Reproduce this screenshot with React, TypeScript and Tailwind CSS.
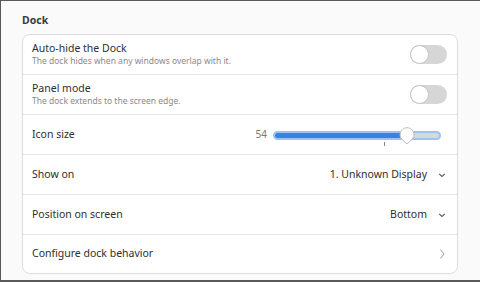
import React from 'react';

const font = { fontFamily: '"Noto Sans", "Open Sans", sans-serif' };

function Toggle() {
  return (
    <div className="relative h-[19px] w-[37px] rounded-full bg-[#d6d6d6]">
      <div className="absolute left-0 top-0 h-[19px] w-[19px] rounded-full border border-[#c4c4c4] bg-white" />
    </div>
  );
}

function Chevron({ right }: { right?: boolean }) {
  return right ? (
    <svg width="10" height="12" viewBox="0 0 10 12" className="text-[#9a9a9a]">
      <path d="M3.5 1.5 L7 6 L3.5 10.5" fill="none" stroke="currentColor" strokeWidth="1" />
    </svg>
  ) : (
    <svg width="10" height="10" viewBox="0 0 10 10" className="text-[#555]">
      <path d="M2.2 3.8 L5 6.4 L7.8 3.8" fill="none" stroke="currentColor" strokeWidth="1.1" />
    </svg>
  );
}

function Row({ children, last }: { children: React.ReactNode; last?: boolean }) {
  return (
    <div
      className={`flex items-center justify-between pl-[9px] pr-[10px] ${
        last ? 'h-[38px]' : 'h-[40px] border-b border-[#e6e6e6]'
      }`}
    >
      {children}
    </div>
  );
}

function Slider({ value }: { value: number }) {
  // value in percent of track
  return (
    <div className="relative mr-[6px] h-[20px] w-[168px]">
      <div className="absolute left-0 top-[6px] h-[9px] w-full rounded-full border-2 border-[#9cc2f0] bg-[#d8d8d8]">
        <div className="h-full rounded-full bg-[#3584e4]" style={{ width: `${value}%` }} />
      </div>
      <div className="absolute left-[111px] top-[17px] h-[4px] w-px bg-[#888]" />
      <svg
        width="16"
        height="19"
        viewBox="0 0 16 19"
        className="absolute top-[1px]"
        style={{ left: `calc(${value}% - 8px)` }}
      >
        <path
          d="M8 18 L2.2 12.6 A7 7 0 1 1 13.8 12.6 Z"
          fill="#ffffff"
          stroke="#bdbdbd"
          strokeWidth="1"
        />
      </svg>
    </div>
  );
}

export default function App() {
  return (
    <div
      className="h-[282px] w-[480px] overflow-hidden border-l border-t border-b-2 border-[#5a5a5a] bg-[#fafafa] px-[21px] text-[#2e2e2e]"
      style={font}
    >
      <div className="pt-[12px] text-[10.5px] font-bold leading-[14px] text-[#3a3a3a]">Dock</div>
      <div className="mt-[7px] w-[436px] rounded-[8px] border border-[#dedede] bg-white">
        <Row>
          <div className="flex flex-col">
            <span className="text-[10.5px] leading-[13px]">Auto-hide the Dock</span>
            <span className="text-[8.5px] leading-[12px] text-[#8a8a8a]">
              The dock hides when any windows overlap with it.
            </span>
          </div>
          <Toggle />
        </Row>
        <Row>
          <div className="flex flex-col">
            <span className="text-[10.5px] leading-[13px]">Panel mode</span>
            <span className="text-[8.5px] leading-[12px] text-[#8a8a8a]">
              The dock extends to the screen edge.
            </span>
          </div>
          <Toggle />
        </Row>
        <Row>
          <span className="text-[10.5px]">Icon size</span>
          <div className="flex items-center gap-[6px]">
            <span className="text-[10px] text-[#7a7a7a]">54</span>
            <Slider value={80} />
          </div>
        </Row>
        <Row>
          <span className="text-[10.5px]">Show on</span>
          <div className="flex items-center gap-[10px]">
            <span className="text-[10.5px]">1. Unknown Display</span>
            <Chevron />
          </div>
        </Row>
        <Row>
          <span className="text-[10.5px]">Position on screen</span>
          <div className="flex items-center gap-[10px]">
            <span className="text-[10.5px]">Bottom</span>
            <Chevron />
          </div>
        </Row>
        <Row last>
          <span className="text-[10.5px]">Configure dock behavior</span>
          <Chevron right />
        </Row>
      </div>
    </div>
  );
}
